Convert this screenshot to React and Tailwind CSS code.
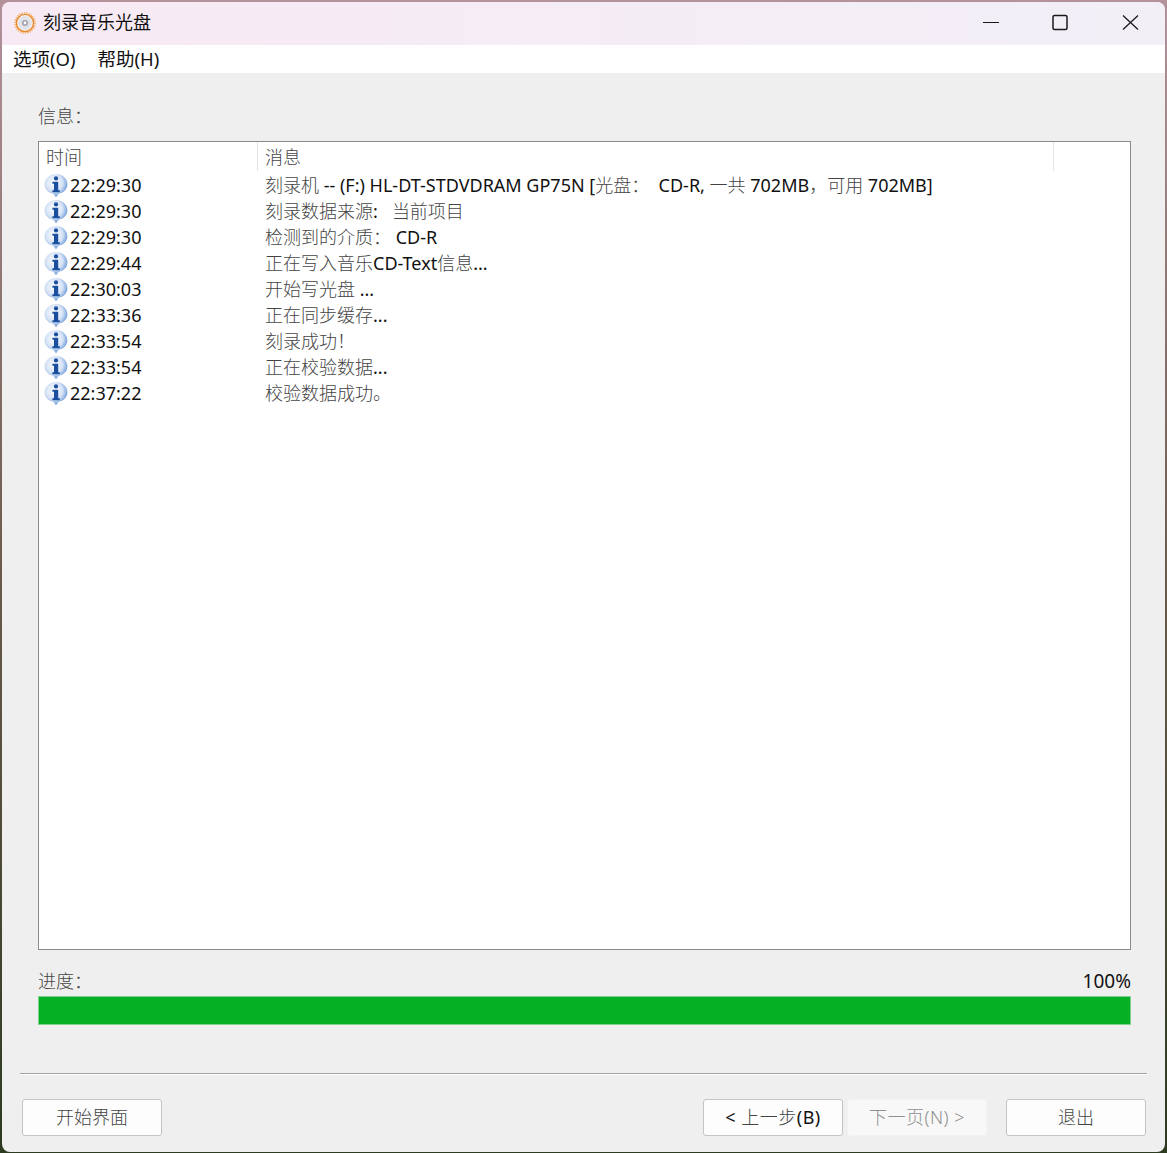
const rows = [
  ["22:29:30", "刻录机 -- (F:) HL-DT-STDVDRAM GP75N [光盘：  CD-R, 一共 702MB，可用 702MB]"],
  ["22:29:30", "刻录数据来源:   当前项目"],
  ["22:29:30", "检测到的介质： CD-R"],
  ["22:29:44", "正在写入音乐CD-Text信息..."],
  ["22:30:03", "开始写光盘 ..."],
  ["22:33:36", "正在同步缓存..."],
  ["22:33:54", "刻录成功！"],
  ["22:33:54", "正在校验数据..."],
  ["22:37:22", "校验数据成功。"],
];

const font = "font-['Noto_Sans','Noto_Sans_CJK_SC',sans-serif]";

// Chinese runs are thinner and greyer than the latin ones in the dialog body
function Mixed({ text }) {
  return text.split(/([\u3000-\u9fff\uff00-\uffef]+)/).map((part, i) =>
    i % 2 ? (
      <span key={i} className="font-light text-[#444444]">{part}</span>
    ) : (
      <span key={i}>{part}</span>
    )
  );
}

function DiscIcon() {
  return (
    <svg width="22" height="22" viewBox="0 0 22 22">
      <circle cx="11" cy="11" r="10" fill="none" stroke="#f3b067" strokeWidth="1.6" strokeDasharray="1.4 1" />
      <circle cx="11" cy="11" r="8.6" fill="#eeeeee" stroke="#e8882c" strokeWidth="1.4" />
      <circle cx="11" cy="11" r="6.5" fill="#e2e2ea" />
      <circle cx="11" cy="11" r="3" fill="#a0a0a8" />
      <circle cx="11" cy="11" r="1.4" fill="#ffffff" />
    </svg>
  );
}

function InfoIcon() {
  return (
    <svg width="24" height="25" viewBox="0 0 24 25" className="shrink-0">
      <defs>
        <radialGradient id="bubble" cx="0.42" cy="0.38" r="0.68">
          <stop offset="0" stopColor="#ffffff" />
          <stop offset="0.55" stopColor="#d5e2f5" />
          <stop offset="1" stopColor="#4d86d0" />
        </radialGradient>
      </defs>
      <path d="M12 1C5.6 1 .6 5.5.6 11.3c0 5 3.8 8.8 8.7 9.5l2.7 3.4 2.7-3.4c4.9-.7 8.7-4.5 8.7-9.5C23.4 5.5 18.4 1 12 1z" fill="url(#bubble)" />
      <circle cx="12" cy="5.4" r="2.1" fill="#1a4f9f" />
      <path d="M8.4 8.8h5.8v8.4h1.6v2H8.4v-2h1.6v-6.4H8.4z" fill="#1a4f9f" />
    </svg>
  );
}

function WizardButton({ children, disabled, className = "" }) {
  return (
    <button
      className={`h-[37px] w-[140px] rounded-[3px] border text-[18px] leading-[35px] ${
        disabled ? "border-[#f3f3f3] bg-[#f8f8f8] text-[#8e8e8e]" : "border-[#c4c4c4] bg-[#fdfdfd] text-[#111111]"
      } ${className}`}
    >
      {children}
    </button>
  );
}

export default function App() {
  return (
    <div className={`h-[1153px] w-[1167px] overflow-hidden bg-gradient-to-b from-[#b3929c] via-[#6b5a4a] to-[#2c3a20] px-[2px] pt-[2px] ${font}`}>
      <div className="flex h-[1150px] flex-col overflow-hidden rounded-[8px] bg-[#efefef]">
        {/* Title bar */}
        <div className="flex h-[43px] items-center bg-gradient-to-r from-[#f8eaf4] to-[#f2eff7] pb-[2px] pl-[12px]">
          <DiscIcon />
          <span className="ml-[7px] text-[18px] text-[#111111]">刻录音乐光盘</span>
          <div className="ml-auto flex items-center pt-[2px] text-[#1a1a1a]">
            <svg width="70" height="43" viewBox="0 0 70 43">
              <path d="M28 20.5h16" stroke="currentColor" strokeWidth="1.2" />
            </svg>
            <svg width="70" height="43" viewBox="0 0 70 43">
              <rect x="28" y="13.5" width="14" height="14" rx="1.5" fill="none" stroke="currentColor" strokeWidth="1.5" />
            </svg>
            <svg width="70" height="43" viewBox="0 0 70 43">
              <path d="M28 13.5l15 14M43 13.5l-15 14" stroke="currentColor" strokeWidth="1.3" />
            </svg>
          </div>
        </div>

        {/* Menu */}
        <div className="flex h-[28px] items-center gap-[22px] bg-white pl-[11px] text-[18.5px] text-[#111111]">
          <span>选项(O)</span>
          <span>帮助(H)</span>
        </div>

        <div className="flex flex-1 flex-col pl-[36px] pr-[34px]">
          <div className="mt-[31px] h-[24px] text-[18px] font-light leading-[24px] text-[#444444]">信息：</div>

          {/* Log list */}
          <div className="mt-[13px] h-[809px] border border-[#8a8a8a] bg-white">
            <div className="flex h-[29px] text-[18px] font-light text-[#444444]">
              <div className="w-[219px] border-r border-[#e5e5e5] pl-[7px] leading-[31px]">时间</div>
              <div className="w-[796px] border-r border-[#e5e5e5] pl-[7px] leading-[31px]">消息</div>
            </div>
            <div className="mt-[1px]">
              {rows.map(([time, msg], i) => (
                <div key={i} className="flex h-[26px] items-center text-[18px] text-[#111111]">
                  <div className="flex w-[219px] items-center pl-[5px]">
                    <InfoIcon />
                    <span className="ml-[2px]">{time}</span>
                  </div>
                  <div className="whitespace-pre pl-[7px]"><Mixed text={msg} /></div>
                </div>
              ))}
            </div>
          </div>

          {/* Progress */}
          <div className="mt-[19px] flex h-[24px] items-center justify-between text-[#111111]">
            <span className="text-[18px] font-light text-[#444444]">进度：</span>
            <span className="text-[19px]">100%</span>
          </div>
          <div className="mt-[3px] h-[29px] border border-[#7ed08e] bg-[#06b025]" />
        </div>

        {/* Wizard footer */}
        <div className="mx-[18px] mt-[48px] border-t border-[#a0a0a0] shadow-[0_1px_0_#ffffff]" />
        <div className="flex pb-[16px] pl-[20px] pr-[19px] pt-[25px]">
          <WizardButton><Mixed text="开始界面" /></WizardButton>
          <WizardButton className="ml-auto tracking-[0.5px]"><Mixed text="< 上一步(B)" /></WizardButton>
          <WizardButton disabled className="ml-[4px] font-light tracking-[0.5px]">{"下一页(N) >"}</WizardButton>
          <WizardButton className="ml-[19px]"><Mixed text="退出" /></WizardButton>
        </div>
      </div>
    </div>
  );
}
